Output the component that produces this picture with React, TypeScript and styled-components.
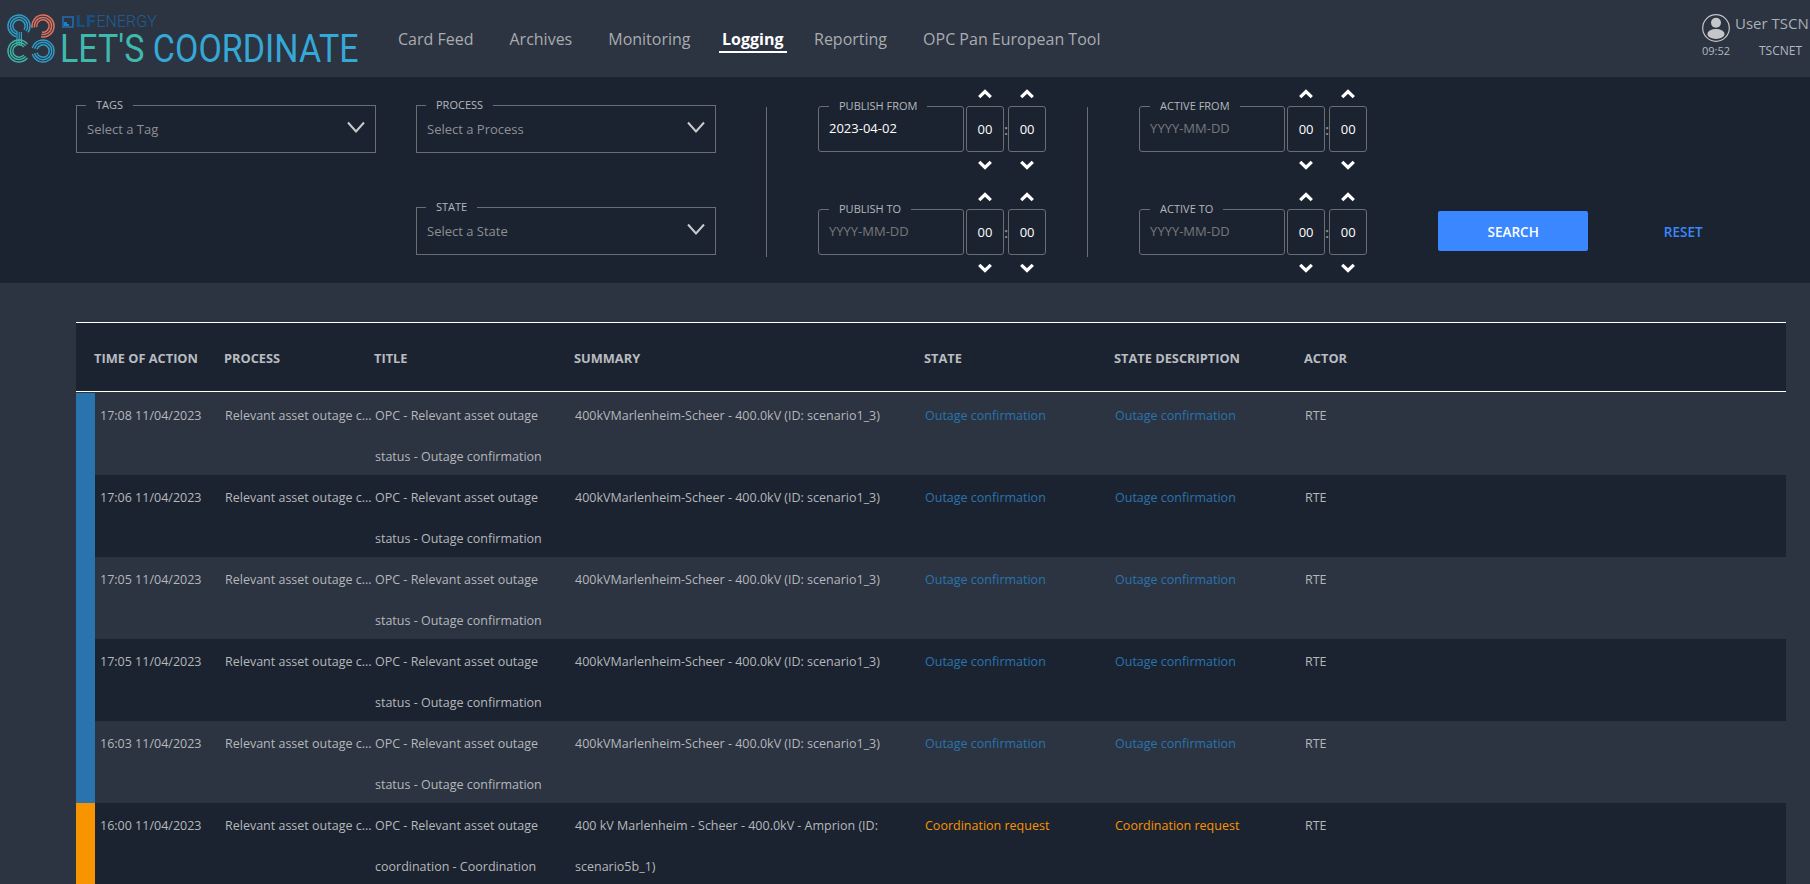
import React from 'react';
import styled, { createGlobalStyle } from 'styled-components';

const DARK = '#1c2330';
const LIGHT = '#2c3341';
const BORDER = '#6a6d72';
const BLUE = '#2a74ad';
const ORANGE = '#f79400';

const GlobalStyle = createGlobalStyle`
  html, body {
    margin: 0;
    height: 100%;
    overflow: hidden;
    background: ${LIGHT};
    font-family: 'Open Sans', 'Noto Sans', sans-serif;
  }
`;

const Page = styled.div`
  width: 1810px;
  height: 884px;
  overflow: hidden;
  background: ${LIGHT};
`;

const Header = styled.header`
  display: flex;
  height: 77px;
  overflow: hidden;
`;

const Brand = styled.div`
  display: flex;
  flex: 0 0 395px;
  min-width: 0;
  padding: 14px 0 0 7px;
  box-sizing: border-box;
  gap: 7px;
`;

const LogoGlyph = styled.svg`
  flex: 0 0 48px;
`;

const BrandText = styled.div`
  display: flex;
  flex-direction: column;
  min-width: 0;
  font-family: Roboto, sans-serif;
`;

const EnergyLine = styled.div`
  display: flex;
  align-items: center;
  height: 15px;
  color: #1d5f96;
`;

const LfWord = styled.span`
  margin-left: 2px;
  font-size: 17px;
  line-height: 15px;
  font-weight: 900;
  letter-spacing: 1px;
  color: #17507f;
`;

const EnergyWord = styled.span`
  font-size: 16px;
  line-height: 15px;
  font-weight: 300;
`;

const BrandTitle = styled.div`
  margin-left: -2px;
  font-size: 38px;
  line-height: 40px;
  white-space: nowrap;
  transform: scaleX(0.895);
  transform-origin: left center;
`;

const TitleTint = styled.span<{ $color: string }>`
  color: ${p => p.$color};
`;

const Nav = styled.nav`
  display: flex;
  align-items: flex-start;
  gap: 30px;
  padding-top: 27px;
`;

const NavItem = styled.a<{ $active?: boolean }>`
  padding: 0 3px;
  height: 24px;
  margin: ${p => (p.$active ? '0 -5.5px 0 -4.5px' : '0')};
  font-size: 16px;
  line-height: 24px;
  white-space: nowrap;
  font-weight: ${p => (p.$active ? 700 : 400)};
  color: ${p => (p.$active ? '#fff' : '#a9acb0')};
  border-bottom: 2px solid ${p => (p.$active ? '#fff' : 'transparent')};
`;

const UserBox = styled.div`
  position: absolute;
  left: 1702px;
  top: 14px;
  width: 108px;
  overflow: hidden;
`;

const UserRow = styled.div`
  display: flex;
  align-items: center;
  white-space: nowrap;
`;

const UserName = styled.span`
  margin-left: 5px;
  margin-top: -11px;
  font-size: 15px;
  color: #a9b0b8;
`;

const Clock = styled.span`
  flex: 0 0 57px;
  font-size: 11px;
  line-height: 18px;
  color: #b4b8bd;
`;

const Entity = styled.span`
  font-size: 12px;
  line-height: 18px;
  color: #b4b8bd;
`;

const FilterBar = styled.section`
  display: flex;
  height: 206px;
  box-sizing: border-box;
  padding-left: 76px;
  background: ${DARK};
`;

const SelectColumn = styled.div`
  display: flex;
  flex-direction: column;
  gap: 54px;
  width: 300px;
  margin-right: 40px;
  padding-top: 28px;
`;

const SelectBox = styled.div`
  position: relative;
  display: flex;
  align-items: center;
  justify-content: space-between;
  height: 48px;
  box-sizing: border-box;
  padding: 0 10px;
  border: 1px solid ${BORDER};
  font-size: 13px;
  color: #8d9095;
`;

const SelectChevron = styled.svg`
  margin-top: -5px;
`;

const FloatLabel = styled.span<{ $left: number }>`
  position: absolute;
  left: ${p => p.$left}px;
  top: -8px;
  padding: 0 10px;
  font-size: 11px;
  line-height: 14px;
  text-transform: uppercase;
  color: #b4b8bd;
  background: ${DARK};
`;

const Divider = styled.div<{ $left?: number }>`
  flex: 0 0 1px;
  height: 150px;
  margin: 30px 0 0 ${p => p.$left || 0}px;
  background: #6a6d72;
`;

const DateColumn = styled.div<{ $left: number; $right: number }>`
  display: flex;
  flex-direction: column;
  gap: 19px;
  padding-top: 10px;
  margin-left: ${p => p.$left}px;
  margin-right: ${p => p.$right}px;
`;

const DateRow = styled.div`
  display: flex;
  align-items: center;
  height: 84px;
`;

const DateBox = styled.div<{ $filled?: boolean }>`
  position: relative;
  display: flex;
  align-items: center;
  width: 146px;
  height: 46px;
  box-sizing: border-box;
  margin-right: 2px;
  padding: 0 10px;
  border: 1px solid ${BORDER};
  border-radius: 3px;
  font-size: 13px;
  color: ${p => (p.$filled ? '#fff' : '#75787d')};
`;

const DateValue = styled.span`
  margin-top: -3px;
`;

const Spinner = styled.div`
  display: flex;
  flex-direction: column;
  align-items: center;
  gap: 7px;
`;

const SpinArrow = styled.svg`
  display: block;
  width: 14px;
  height: 12px;
`;

const TimeBox = styled.div`
  display: flex;
  align-items: center;
  justify-content: center;
  width: 38px;
  height: 46px;
  box-sizing: border-box;
  border: 1px solid ${BORDER};
  border-radius: 3px;
  font-size: 13px;
  color: #fff;
`;

const Colon = styled.span`
  flex: 0 0 4px;
  text-align: center;
  font-size: 15px;
  font-weight: 600;
  color: #8d9095;
`;

const ActionGroup = styled.div`
  display: flex;
  align-items: center;
  align-self: flex-end;
  margin: 0 0 32px 71px;
`;

const SearchButton = styled.button`
  width: 150px;
  height: 40px;
  padding: 2px 0 0;
  border: 0;
  border-radius: 2px;
  background: #3a87ff;
  color: #fff;
  font-family: inherit;
  font-size: 13.5px;
  font-weight: 600;
`;

const ResetButton = styled.button`
  width: 190px;
  padding: 2px 0 0;
  border: 0;
  background: none;
  color: #3a87ff;
  font-family: inherit;
  font-size: 13.5px;
  font-weight: 600;
`;

const TableWrap = styled.section`
  width: 1710px;
  margin: 39px 0 0 76px;
`;

const columns = '130px 150px 200px 350px 190px 190px 1fr';

const TableHead = styled.div`
  display: grid;
  grid-template-columns: 18px ${columns};
  align-items: center;
  height: 70px;
  box-sizing: border-box;
  margin-bottom: 1px;
  padding-top: 2px;
  border-top: 1px solid #fff;
  border-bottom: 1px solid #fff;
  background: ${DARK};
  font-size: 12.8px;
  font-weight: 700;
  color: #b9bcc0;
`;

const Row = styled.div<{ $dark: boolean }>`
  display: grid;
  grid-template-columns: 19px ${columns};
  height: 82px;
  overflow: hidden;
  font-size: 12.5px;
  line-height: 41px;
  color: #b5b8bb;
  background: ${p => (p.$dark ? DARK : LIGHT)};
`;

const Cell = styled.div`
  padding-top: 2px;
`;

const Stripe = styled.div<{ $color: string }>`
  background: ${p => p.$color};
`;

const TimeCell = styled(Cell)`
  padding-left: 5px;
`;

const ProcessCell = styled(Cell)`
  white-space: nowrap;
`;

const TitleCell = styled(Cell)`
  padding-right: 25px;
`;

const SummaryCell = styled(Cell)`
  padding-right: 30px;
`;

const StateCell = styled(Cell)<{ $color: string }>`
  color: ${p => p.$color};
`;

// one ring of the logo, angles in degrees, 0 = right, clockwise
const arc = (cx: number, cy: number, r: number, from: number, to: number) => {
  const rad = (d: number) => (d * Math.PI) / 180;
  const x1 = cx + r * Math.cos(rad(from));
  const y1 = cy + r * Math.sin(rad(from));
  const x2 = cx + r * Math.cos(rad(to));
  const y2 = cy + r * Math.sin(rad(to));
  const large = to - from > 180 ? 1 : 0;
  return `M${x1.toFixed(2)} ${y1.toFixed(2)}A${r} ${r} 0 ${large} 1 ${x2.toFixed(2)} ${y2.toFixed(2)}`;
};

const Rings = ({ cx, cy, from, to, color }: { cx: number; cy: number; from: number; to: number; color: string }) => (
  <g fill="none" stroke={color} strokeWidth="1.5">
    {[11, 8.6, 6.2].map(r => (
      <path key={r} d={arc(cx, cy, r, from, to)} />
    ))}
  </g>
);

const LogoMark = () => (
  <LogoGlyph width="48" height="50" viewBox="0 0 48 50">
    <Rings cx={12} cy={12} from={105} to={395} color="#2f9fc9" />
    <Rings cx={36} cy={12} from={-190} to={100} color="#e2735f" />
    <Rings cx={12} cy={37} from={40} to={320} color="#3cb4a6" />
    <Rings cx={36} cy={37} from={-165} to={165} color="#2f9fc9" />
    <path d="M10 18v7M12.2 18v7M14.4 18v7" stroke="#2f9fc9" strokeWidth="1.2" />
    <path d="M10 25v6M12.2 25v6M14.4 25v6" stroke="#3cb4a6" strokeWidth="1.2" />
  </LogoGlyph>
);

const LfSquare = () => (
  <svg width="12" height="12" viewBox="0 0 12 12">
    <path d="M1 11V1h10v10z" fill="none" stroke="#1f6fb0" strokeWidth="1.6" />
    <path d="M2 10V6h3v2h2v2z" fill="#1f80c8" />
  </svg>
);

const UserGlyph = styled.svg`
  flex: 0 0 28px;
`;

const UserIcon = () => (
  <UserGlyph width="28" height="28" viewBox="0 0 28 28">
    <circle cx="14" cy="14" r="13.3" fill="none" stroke="#c4c6c9" strokeWidth="1.2" />
    <circle cx="14" cy="8.8" r="5" fill="#c4c6c9" />
    <ellipse cx="14" cy="20" rx="8.6" ry="5" fill="#c4c6c9" />
  </UserGlyph>
);

const Chevron = ({ down }: { down?: boolean }) => (
  <SpinArrow viewBox="0 0 14 12">
    <polyline
      points={down ? '1.2,2.8 7,8.5 12.8,2.8' : '1.2,10.2 7,4.5 12.8,10.2'}
      fill="none"
      stroke="#fff"
      strokeWidth="3.2"
    />
  </SpinArrow>
);

const SelectArrow = () => (
  <SelectChevron width="18" height="12" viewBox="0 0 18 12">
    <polyline points="1,1.5 9,10.5 17,1.5" fill="none" stroke="#c8cacc" strokeWidth="2" />
  </SelectChevron>
);

const TimeSpinner = () => (
  <Spinner>
    <Chevron />
    <TimeBox>00</TimeBox>
    <Chevron down />
  </Spinner>
);

const DateField = ({ label, value }: { label: string; value?: string }) => (
  <DateRow>
    <DateBox $filled={!!value}>
      <FloatLabel $left={10}>{label}</FloatLabel>
      <DateValue>{value || 'YYYY-MM-DD'}</DateValue>
    </DateBox>
    <TimeSpinner />
    <Colon>:</Colon>
    <TimeSpinner />
  </DateRow>
);

const SelectField = ({ label, placeholder }: { label: string; placeholder: string }) => (
  <SelectBox>
    <FloatLabel $left={9}>{label}</FloatLabel>
    <span>{placeholder}</span>
    <SelectArrow />
  </SelectBox>
);

const confirmation = {
  title: 'OPC - Relevant asset outage status - Outage confirmation',
  summary: '400kVMarlenheim-Scheer - 400.0kV (ID: scenario1_3)',
  state: 'Outage confirmation',
  color: BLUE,
};

const rows = [
  { time: '17:08 11/04/2023', ...confirmation },
  { time: '17:06 11/04/2023', ...confirmation },
  { time: '17:05 11/04/2023', ...confirmation },
  { time: '17:05 11/04/2023', ...confirmation },
  { time: '16:03 11/04/2023', ...confirmation },
  {
    time: '16:00 11/04/2023',
    title: 'OPC - Relevant asset outage coordination - Coordination',
    summary: '400 kV Marlenheim - Scheer - 400.0kV - Amprion (ID: scenario5b_1)',
    state: 'Coordination request',
    color: ORANGE,
  },
];

const navItems = ['Card Feed', 'Archives', 'Monitoring', 'Logging', 'Reporting', 'OPC Pan European Tool'];

export default function App() {
  return (
    <Page>
      <GlobalStyle />
      <Header>
        <Brand>
          <LogoMark />
          <BrandText>
            <EnergyLine>
              <LfSquare />
              <LfWord>LF</LfWord>
              <EnergyWord>ENERGY</EnergyWord>
            </EnergyLine>
            <BrandTitle>
              <TitleTint $color="#3fb9ac">LET'S </TitleTint>
              <TitleTint $color="#35a8d6">COORDINATE</TitleTint>
            </BrandTitle>
          </BrandText>
        </Brand>
        <Nav>
          {navItems.map(item => (
            <NavItem key={item} $active={item === 'Logging'}>
              {item}
            </NavItem>
          ))}
        </Nav>
        <UserBox>
          <UserRow>
            <UserIcon />
            <UserName>User TSCNET</UserName>
          </UserRow>
          <UserRow>
            <Clock>09:52</Clock>
            <Entity>TSCNET</Entity>
          </UserRow>
        </UserBox>
      </Header>

      <FilterBar>
        <SelectColumn>
          <SelectField label="Tags" placeholder="Select a Tag" />
        </SelectColumn>
        <SelectColumn>
          <SelectField label="Process" placeholder="Select a Process" />
          <SelectField label="State" placeholder="Select a State" />
        </SelectColumn>
        <Divider $left={10} />
        <DateColumn $left={51} $right={41}>
          <DateField label="Publish from" value="2023-04-02" />
          <DateField label="Publish to" />
        </DateColumn>
        <Divider />
        <DateColumn $left={51} $right={0}>
          <DateField label="Active from" />
          <DateField label="Active to" />
        </DateColumn>
        <ActionGroup>
          <SearchButton>SEARCH</SearchButton>
          <ResetButton>RESET</ResetButton>
        </ActionGroup>
      </FilterBar>

      <TableWrap>
        <TableHead>
          <span />
          <span>TIME OF ACTION</span>
          <span>PROCESS</span>
          <span>TITLE</span>
          <span>SUMMARY</span>
          <span>STATE</span>
          <span>STATE DESCRIPTION</span>
          <span>ACTOR</span>
        </TableHead>
        {rows.map((row, i) => (
          <Row key={i} $dark={i % 2 === 1}>
            <Stripe $color={row.color} />
            <TimeCell>{row.time}</TimeCell>
            <ProcessCell>Relevant asset outage c...</ProcessCell>
            <TitleCell>{row.title}</TitleCell>
            <SummaryCell>{row.summary}</SummaryCell>
            <StateCell $color={row.color}>{row.state}</StateCell>
            <StateCell $color={row.color}>{row.state}</StateCell>
            <Cell>RTE</Cell>
          </Row>
        ))}
      </TableWrap>
    </Page>
  );
}
